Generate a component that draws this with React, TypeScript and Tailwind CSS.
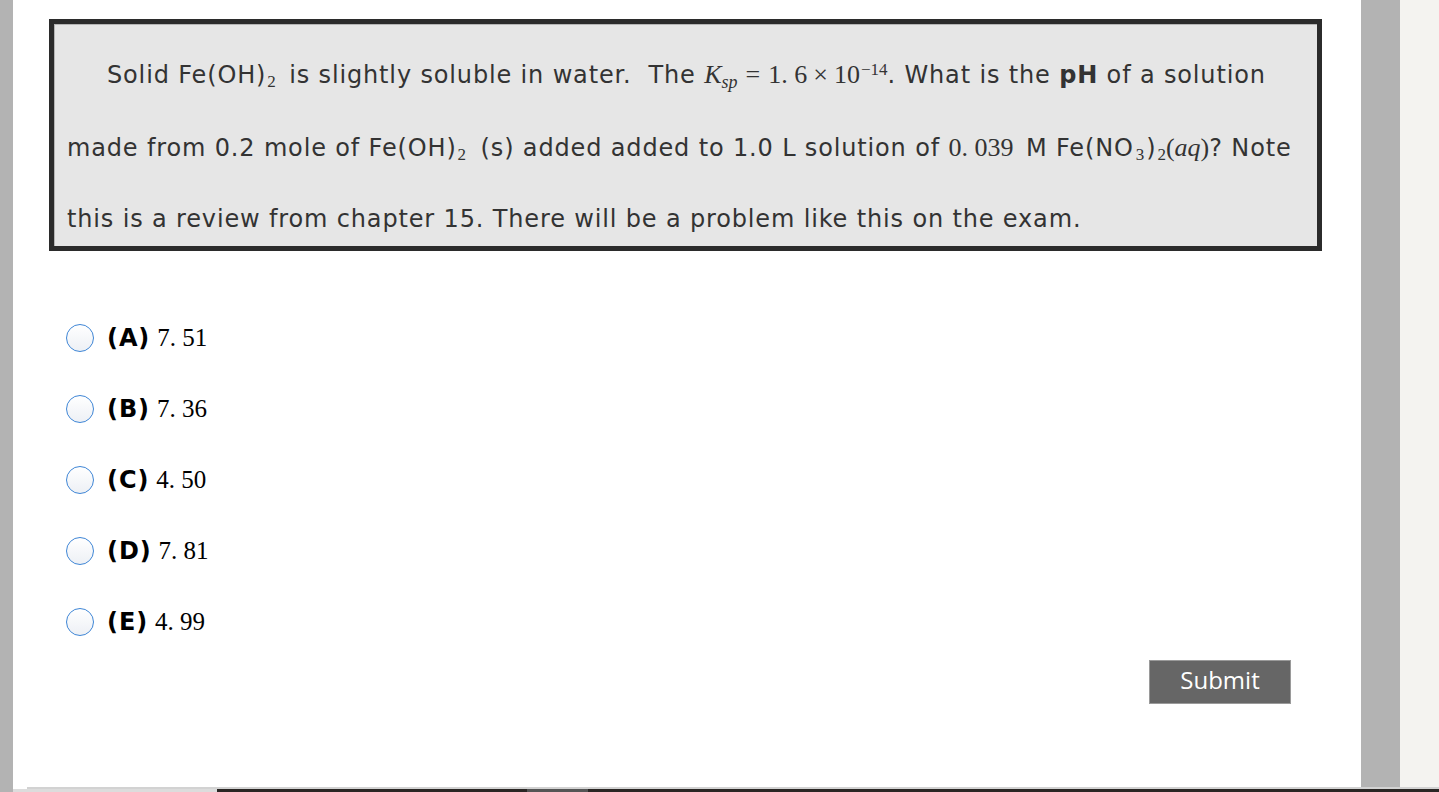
import React from "react";

const sans = { fontFamily: '"DejaVu Sans", Verdana, sans-serif' } as const;

function Radio() {
  return (
    <span className="inline-block w-[28px] h-[28px] rounded-full border-[1.5px] border-[#3f86d6] bg-gradient-to-b from-white to-[#edf0f5] shrink-0" />
  );
}

const options: [string, string][] = [
  ["A", "7. 51"],
  ["B", "7. 36"],
  ["C", "4. 50"],
  ["D", "7. 81"],
  ["E", "4. 99"],
];

export default function App() {
  return (
    <div className="w-[1439px] h-[792px] overflow-hidden flex flex-col bg-white">
      <div className="flex flex-1 min-h-0">
        <div className="w-[13px] bg-[#b3b3b3]" />
        <div className="flex-1 bg-white relative">
          <div className="ml-[36px] mt-[19px] w-[1273px] h-[232px] border-[5px] border-[#2b2b2b] bg-[#e6e6e6] shadow-[inset_1px_1px_0_#b5b5b5]">
            <div
              className="pl-[13px] pr-[10px] pt-[15px] text-[24px] tracking-[0.85px] leading-[71.5px] text-[#333] whitespace-nowrap"
              style={sans}
            >
              <div className="pl-[40px]">
                Solid Fe(OH)<sub className="text-[17px] font-['Liberation_Serif'] tracking-normal ml-[1px] mr-[5px]">2</sub> is slightly soluble in water.&nbsp; The{" "}
                <span className="font-['Liberation_Serif'] text-[26px] tracking-normal">
                  <i>K</i><sub className="text-[18px] italic">sp</sub><span className="mx-[8px]">=</span>1. 6<span className="mx-[6px]">×</span>10<sup className="text-[17px] ml-[1px]">−14</sup>
                </span>
                . What is the <b>pH</b> of a solution
              </div>
              <div>
                made from 0.2 mole of Fe(OH)<sub className="text-[17px] font-['Liberation_Serif'] tracking-normal ml-[1px] mr-[6px]">2</sub> (s) added added to 1.0 L solution of{" "}
                <span className="font-['Liberation_Serif'] text-[26px] tracking-normal">0. 039</span><span className="ml-[4px]"> M</span> Fe(NO
                <sub className="font-['Liberation_Serif'] text-[17px] tracking-normal ml-[2px] mr-[2px]">3</sub>)
                <sub className="font-['Liberation_Serif'] text-[17px] tracking-normal ml-[1px]">2</sub>
                <span className="font-['Liberation_Serif'] text-[26px] tracking-normal">(<i>aq</i>)</span>? Note
              </div>
              <div>
                this is a review from chapter 15. There will be a problem like this on the exam.
              </div>
            </div>
          </div>

          <div className="ml-[53px] mt-[73px] flex flex-col gap-[43px]">
            {options.map(([l, v]) => (
              <div key={l} className="flex items-center h-[28px]">
                <Radio />
                <span className="ml-[13px] text-[24px] tracking-[0.9px] font-bold text-black" style={sans}>
                  ({l})
                </span>
                <span className="ml-[7px] text-[25px] text-black font-['Liberation_Serif']">{v}</span>
              </div>
            ))}
          </div>

          <div className="absolute left-[1136px] top-[660px]">
            <button className="w-[142px] h-[44px] bg-[#666] border border-[#9a9a9a] text-white text-[24px] font-['Open_Sans'] leading-none pb-[4px]">
              Submit
            </button>
          </div>
        </div>
        <div className="w-[39px] bg-[#b3b3b3]" />
        <div className="w-[39px] bg-[#f4f3f0]" />
      </div>
      <div className="h-[5px] flex">
        <div className="w-[13px] bg-[#b3b3b3]" />
        <div className="flex-1 flex flex-col">
          <div className="h-[2px] bg-[#d2d2d2] ml-[14px]" />
          <div className="flex-1 flex">
            <div className="w-[204px] bg-[#dcdcdc]" />
            <div className="w-[310px] bg-[#2a2624]" />
            <div className="w-[61px] bg-[#555]" />
            <div className="flex-1 bg-[#2a2624]" />
          </div>
        </div>
      </div>
    </div>
  );
}
